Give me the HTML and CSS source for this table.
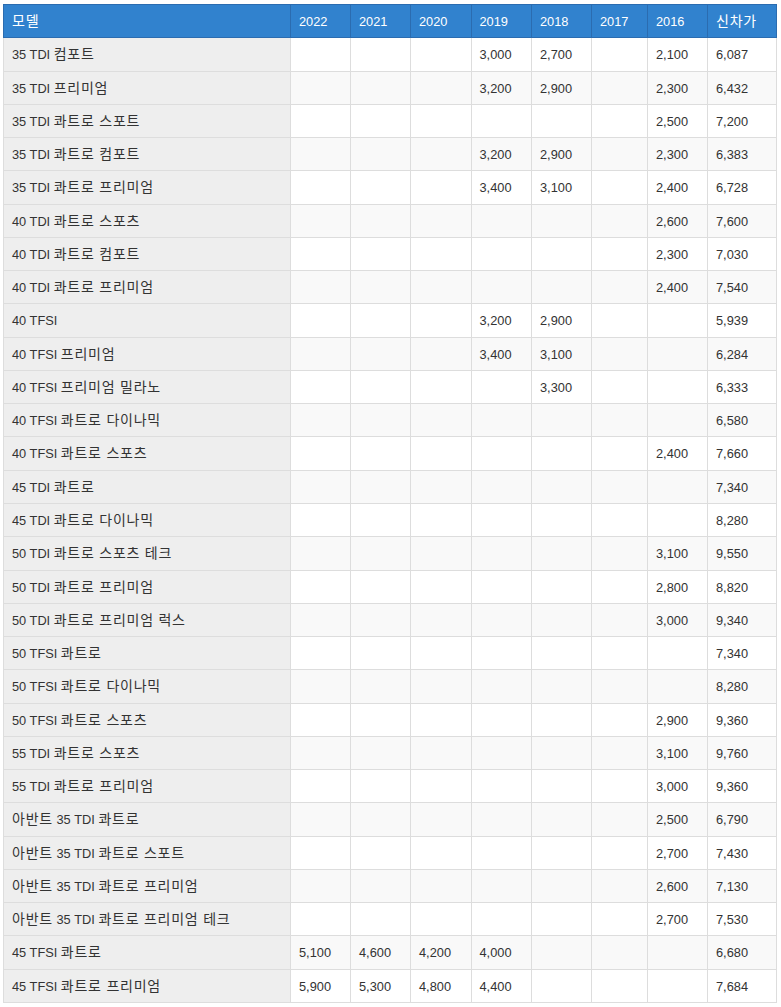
FILE: index.html
```html
<!DOCTYPE html>
<html lang="ko">
<head>
<meta charset="utf-8">
<title>가격표</title>
<link rel="stylesheet" href="styles.css">
</head>
<body>
<table class="price-table">
  <colgroup>
    <col class="c-model"><col class="c-y"><col class="c-y"><col class="c-y2"><col class="c-y2"><col class="c-y"><col class="c-y17"><col class="c-y"><col class="c-new">
  </colgroup>
  <thead>
    <tr><th><span class="ko">모델</span></th><th>2022</th><th>2021</th><th>2020</th><th>2019</th><th>2018</th><th>2017</th><th>2016</th><th><span class="ko">신차가</span></th></tr>
  </thead>
  <tbody>
    <tr><td>35 TDI <span class="ko">컴포트</span></td><td></td><td></td><td></td><td>3,000</td><td>2,700</td><td></td><td>2,100</td><td>6,087</td></tr>
    <tr><td>35 TDI <span class="ko">프리미엄</span></td><td></td><td></td><td></td><td>3,200</td><td>2,900</td><td></td><td>2,300</td><td>6,432</td></tr>
    <tr><td>35 TDI <span class="ko">콰트로 스포트</span></td><td></td><td></td><td></td><td></td><td></td><td></td><td>2,500</td><td>7,200</td></tr>
    <tr><td>35 TDI <span class="ko">콰트로 컴포트</span></td><td></td><td></td><td></td><td>3,200</td><td>2,900</td><td></td><td>2,300</td><td>6,383</td></tr>
    <tr><td>35 TDI <span class="ko">콰트로 프리미엄</span></td><td></td><td></td><td></td><td>3,400</td><td>3,100</td><td></td><td>2,400</td><td>6,728</td></tr>
    <tr><td>40 TDI <span class="ko">콰트로 스포츠</span></td><td></td><td></td><td></td><td></td><td></td><td></td><td>2,600</td><td>7,600</td></tr>
    <tr><td>40 TDI <span class="ko">콰트로 컴포트</span></td><td></td><td></td><td></td><td></td><td></td><td></td><td>2,300</td><td>7,030</td></tr>
    <tr><td>40 TDI <span class="ko">콰트로 프리미엄</span></td><td></td><td></td><td></td><td></td><td></td><td></td><td>2,400</td><td>7,540</td></tr>
    <tr><td>40 TFSI</td><td></td><td></td><td></td><td>3,200</td><td>2,900</td><td></td><td></td><td>5,939</td></tr>
    <tr><td>40 TFSI <span class="ko">프리미엄</span></td><td></td><td></td><td></td><td>3,400</td><td>3,100</td><td></td><td></td><td>6,284</td></tr>
    <tr><td>40 TFSI <span class="ko">프리미엄 밀라노</span></td><td></td><td></td><td></td><td></td><td>3,300</td><td></td><td></td><td>6,333</td></tr>
    <tr><td>40 TFSI <span class="ko">콰트로 다이나믹</span></td><td></td><td></td><td></td><td></td><td></td><td></td><td></td><td>6,580</td></tr>
    <tr><td>40 TFSI <span class="ko">콰트로 스포츠</span></td><td></td><td></td><td></td><td></td><td></td><td></td><td>2,400</td><td>7,660</td></tr>
    <tr><td>45 TDI <span class="ko">콰트로</span></td><td></td><td></td><td></td><td></td><td></td><td></td><td></td><td>7,340</td></tr>
    <tr><td>45 TDI <span class="ko">콰트로 다이나믹</span></td><td></td><td></td><td></td><td></td><td></td><td></td><td></td><td>8,280</td></tr>
    <tr><td>50 TDI <span class="ko">콰트로 스포츠 테크</span></td><td></td><td></td><td></td><td></td><td></td><td></td><td>3,100</td><td>9,550</td></tr>
    <tr><td>50 TDI <span class="ko">콰트로 프리미엄</span></td><td></td><td></td><td></td><td></td><td></td><td></td><td>2,800</td><td>8,820</td></tr>
    <tr><td>50 TDI <span class="ko">콰트로 프리미엄 럭스</span></td><td></td><td></td><td></td><td></td><td></td><td></td><td>3,000</td><td>9,340</td></tr>
    <tr><td>50 TFSI <span class="ko">콰트로</span></td><td></td><td></td><td></td><td></td><td></td><td></td><td></td><td>7,340</td></tr>
    <tr><td>50 TFSI <span class="ko">콰트로 다이나믹</span></td><td></td><td></td><td></td><td></td><td></td><td></td><td></td><td>8,280</td></tr>
    <tr><td>50 TFSI <span class="ko">콰트로 스포츠</span></td><td></td><td></td><td></td><td></td><td></td><td></td><td>2,900</td><td>9,360</td></tr>
    <tr><td>55 TDI <span class="ko">콰트로 스포츠</span></td><td></td><td></td><td></td><td></td><td></td><td></td><td>3,100</td><td>9,760</td></tr>
    <tr><td>55 TDI <span class="ko">콰트로 프리미엄</span></td><td></td><td></td><td></td><td></td><td></td><td></td><td>3,000</td><td>9,360</td></tr>
    <tr><td><span class="ko">아반트</span> 35 TDI <span class="ko">콰트로</span></td><td></td><td></td><td></td><td></td><td></td><td></td><td>2,500</td><td>6,790</td></tr>
    <tr><td><span class="ko">아반트</span> 35 TDI <span class="ko">콰트로 스포트</span></td><td></td><td></td><td></td><td></td><td></td><td></td><td>2,700</td><td>7,430</td></tr>
    <tr><td><span class="ko">아반트</span> 35 TDI <span class="ko">콰트로 프리미엄</span></td><td></td><td></td><td></td><td></td><td></td><td></td><td>2,600</td><td>7,130</td></tr>
    <tr><td><span class="ko">아반트</span> 35 TDI <span class="ko">콰트로 프리미엄 테크</span></td><td></td><td></td><td></td><td></td><td></td><td></td><td>2,700</td><td>7,530</td></tr>
    <tr><td>45 TFSI <span class="ko">콰트로</span></td><td>5,100</td><td>4,600</td><td>4,200</td><td>4,000</td><td></td><td></td><td></td><td>6,680</td></tr>
    <tr><td>45 TFSI <span class="ko">콰트로 프리미엄</span></td><td>5,900</td><td>5,300</td><td>4,800</td><td>4,400</td><td></td><td></td><td></td><td>7,684</td></tr>
  </tbody>
</table>
</body>
</html>
```

FILE: styles.css
```css
html, body {
  margin: 0;
  background: #ffffff;
}
body {
  padding: 4px 3px;
  font-family: "Liberation Sans", Arial, "Noto Sans CJK KR", sans-serif;
  font-size: 12.8px;
  line-height: 1.42857;
  color: #333333;
}
.price-table {
  border-collapse: collapse;
  table-layout: fixed;
  width: 773px;
}
.c-model { width: 287px; }
.c-y { width: 60px; }
.c-y2 { width: 60.5px; }
.c-y17 { width: 56px; }
.c-new { width: 69px; }
.price-table th,
.price-table td {
  padding: 8px 8px 6px;
  text-align: left;
  vertical-align: middle;
  white-space: nowrap;
  overflow: hidden;
}
.price-table th {
  background: #3182ce;
  color: #ffffff;
  font-weight: normal;
  border: 1px solid #2b6cb0;
}
.price-table td {
  border: 1px solid #dddddd;
}
.price-table tbody tr:nth-child(even) td {
  background: #f9f9f9;
}
.price-table tbody td:first-child,
.price-table tbody tr:nth-child(even) td:first-child {
  background: #eeeeee;
}
.ko {
  font-family: "Noto Sans CJK KR", sans-serif;
  font-size: 14px;
  line-height: 1;
  letter-spacing: 0.75px;
}
```
